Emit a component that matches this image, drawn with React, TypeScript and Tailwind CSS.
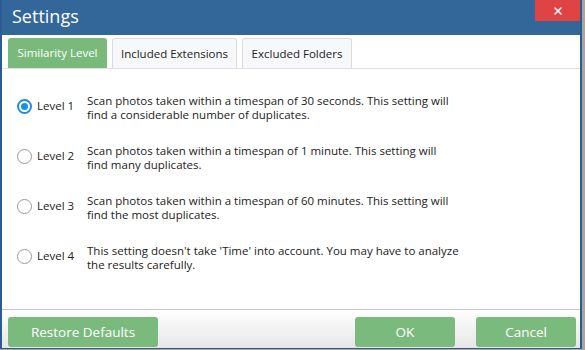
import { X } from 'lucide-react';

const levels = [
  {
    label: 'Level 1',
    lines: ['Scan photos taken within a timespan of 30 seconds. This setting will', 'find a considerable number of duplicates.'],
  },
  {
    label: 'Level 2',
    lines: ['Scan photos taken within a timespan of 1 minute. This setting will', 'find many duplicates.'],
  },
  {
    label: 'Level 3',
    lines: ['Scan photos taken within a timespan of 60 minutes. This setting will', 'find the most duplicates.'],
  },
  {
    label: 'Level 4',
    lines: ["This setting doesn't take 'Time' into account. You may have to analyze", 'the results carefully.'],
  },
];

const tabs = ['Similarity Level', 'Included Extensions', 'Excluded Folders'];

export default function App() {
  return (
    <div
      className="h-[350px] w-[585px] overflow-hidden bg-[#a6a6a6]"
      style={{ fontFamily: '"Open Sans", "Noto Sans", sans-serif' }}
    >
      <div className="flex h-[349px] w-[582px] flex-col border-x-2 border-b border-[#2c5b8f] bg-white">
        <div className="flex h-[35px] shrink-0 items-start justify-between bg-[#336699]">
          <span className="pl-[10px] pt-[4px] text-[18px] leading-[24px] text-white">Settings</span>
          <button className="flex h-[21px] w-[45px] items-center justify-center bg-[#e04343] text-white">
            <X size={12} strokeWidth={3} />
          </button>
        </div>

        <div className="flex gap-[5px] border-b border-[#e1e1e1] px-[6px] pt-[3px]">
          {tabs.map((tab, i) => (
            <div
              key={tab}
              className={
                i === 0
                  ? 'flex h-[30px] w-[99px] items-center justify-center rounded-t-[3px] bg-[#7ab97c] text-[11.5px] text-white'
                  : i === 1
                    ? 'flex h-[30px] w-[125px] items-center justify-center rounded-t-[3px] border border-b-0 border-[#dcdcdc] bg-[#f7f8fc] text-[11.5px] text-[#222]'
                    : 'flex h-[30px] w-[110px] items-center justify-center rounded-t-[3px] border border-b-0 border-[#dcdcdc] bg-[#f7f8fc] text-[11.5px] text-[#222]'
              }
            >
              {tab}
            </div>
          ))}
        </div>

        <div className="flex flex-1 flex-col gap-[22px] pl-[15px] pt-[25px] text-[11.5px] text-[#222]">
          {levels.map((lvl, i) => (
            <div key={lvl.label} className="flex items-start">
              <div className="flex h-[24px] w-[70px] items-center gap-[5px]">
                {i === 0 ? (
                  <span className="flex h-[15px] w-[15px] items-center justify-center rounded-full border-2 border-[#1c8fe0]">
                    <span className="h-[7px] w-[7px] rounded-full bg-[#1c8fe0]" />
                  </span>
                ) : (
                  <span className="h-[15px] w-[15px] rounded-full border border-[#9a9a9a]" />
                )}
                <span className="leading-[14px]">{lvl.label}</span>
              </div>
              <div className="leading-[14px]">
                {lvl.lines.map((l) => (
                  <div key={l}>{l}</div>
                ))}
              </div>
            </div>
          ))}
        </div>

        <div className="flex h-[39px] shrink-0 items-start justify-between border-t border-[#c8c8d0] bg-gradient-to-b from-white to-[#e6e6e6] pl-[6px] pr-[4px] pt-[7px]">
          <button className="h-[30px] w-[150px] rounded-[3px] bg-[#7bba7d] text-[13.5px] text-white">Restore Defaults</button>
          <div className="flex gap-[21px]">
            <button className="h-[30px] w-[100px] rounded-[3px] bg-[#7bba7d] text-[13.5px] text-white">OK</button>
            <button className="h-[30px] w-[100px] rounded-[3px] bg-[#7bba7d] text-[13.5px] text-white">Cancel</button>
          </div>
        </div>
      </div>
    </div>
  );
}
